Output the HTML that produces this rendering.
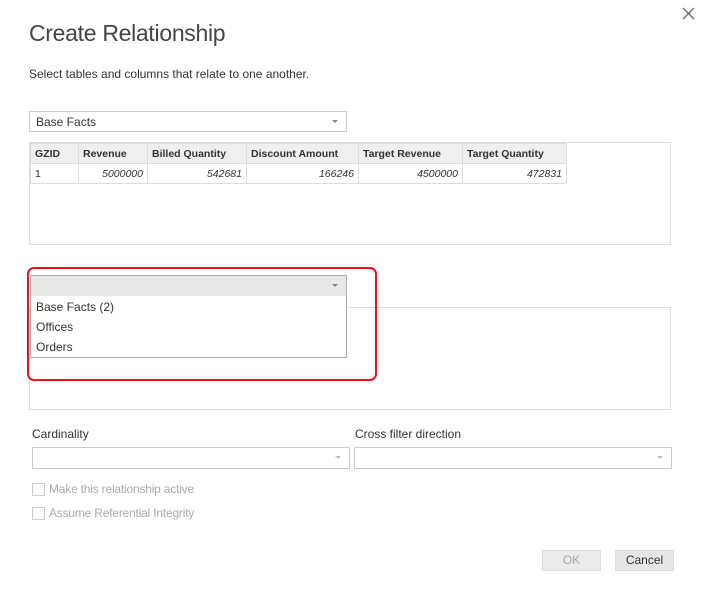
<!DOCTYPE html>
<html><head><style>
body{margin:0;width:705px;height:601px;background:#fff;font-family:"Liberation Sans",sans-serif;color:#333;position:relative;overflow:hidden}
.a{position:absolute}
.dd{position:absolute;border:1px solid #ccc;background:#fff;box-sizing:border-box}
.arr{position:absolute;right:8px;top:8px;width:0;height:0;border-left:3px solid transparent;border-right:3px solid transparent;border-top:3px solid #888}
table{border-collapse:collapse;font-size:10.5px;table-layout:fixed}
td{border:1px solid #ddd;height:20px;padding:0 4px;box-sizing:border-box;white-space:nowrap;overflow:hidden}
th{border:1px solid #ddd;background:#efefef;height:20px;padding:0 4px;text-align:left;font-weight:bold;font-size:10.5px;color:#333;white-space:nowrap;overflow:hidden;box-sizing:border-box}
td.n{text-align:right;font-style:italic}
.cb{position:absolute;width:11px;height:11px;border:1px solid #ccc}
.lbl{position:absolute;font-size:12px;color:#aaa;letter-spacing:-0.2px}
</style></head><body>
<svg class="a" style="left:682px;top:7px" width="13" height="13"><path d="M1 1L12 12M12 1L1 12" stroke="#666" stroke-width="1.3"/></svg>
<div class="a" style="left:29px;top:20px;font-size:23px;color:#444;letter-spacing:-0.3px">Create Relationship</div>
<div class="a" style="left:29px;top:67px;font-size:12px;color:#333">Select tables and columns that relate to one another.</div>
<div class="dd" style="left:29px;top:111px;width:318px;height:21px"><span class="a" style="left:6px;top:3px;font-size:12px">Base Facts</span><div class="arr"></div></div>
<div class="dd" style="left:29px;top:142px;width:642px;height:103px;border-color:#ddd">
<table class="a" style="left:0;top:0;width:536px">
<colgroup><col style="width:48px"><col style="width:69px"><col style="width:99px"><col style="width:112px"><col style="width:104px"><col style="width:104px"></colgroup>
<tr><th>GZID</th><th>Revenue</th><th>Billed Quantity</th><th>Discount Amount</th><th>Target Revenue</th><th>Target Quantity</th></tr>
<tr><td>1</td><td class="n">5000000</td><td class="n">542681</td><td class="n">166246</td><td class="n">4500000</td><td class="n">472831</td></tr>
</table></div>
<div class="dd" style="left:29px;top:307px;width:642px;height:103px;border-color:#ddd"></div>
<div class="a" style="left:27px;top:267px;width:346px;height:110px;border:2px solid #e8131b;border-radius:7px"></div>
<div class="dd" style="left:30px;top:275px;width:317px;height:22px;background:#e8e8e8;border-color:#aaa"><div class="arr"></div></div>
<div class="dd" style="left:30px;top:296px;width:317px;height:62px;border-color:#aaa;border-top:none;font-size:12px">
<div class="a" style="left:5px;top:4px">Base Facts (2)</div>
<div class="a" style="left:5px;top:24px">Offices</div>
<div class="a" style="left:5px;top:44px">Orders</div></div>
<div class="a" style="left:32px;top:427px;font-size:12px">Cardinality</div>
<div class="a" style="left:355px;top:427px;font-size:12px">Cross filter direction</div>
<div class="dd" style="left:32px;top:447px;width:318px;height:22px"><div class="arr" style="border-top-color:#bbb"></div></div>
<div class="dd" style="left:354px;top:447px;width:318px;height:22px"><div class="arr" style="border-top-color:#bbb"></div></div>
<div class="cb" style="left:32px;top:483px"></div><div class="lbl" style="left:49px;top:482px">Make this relationship active</div>
<div class="cb" style="left:32px;top:507px"></div><div class="lbl" style="left:49px;top:506px">Assume Referential Integrity</div>
<div class="a" style="left:542px;top:550px;width:59px;height:21px;background:#ebebeb;border:1px solid #ddd;box-sizing:border-box;text-align:center;line-height:19px;font-size:12px;color:#aaa">OK</div>
<div class="a" style="left:615px;top:550px;width:59px;height:21px;background:#e6e6e6;border:1px solid #ddd;box-sizing:border-box;text-align:center;line-height:19px;font-size:12px;color:#333">Cancel</div>
</body></html>
